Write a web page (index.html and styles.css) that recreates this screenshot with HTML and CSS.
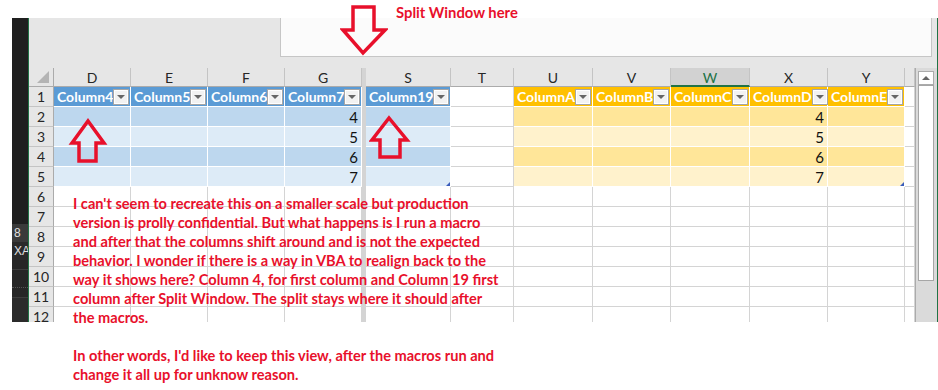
FILE: index.html
```html
<!DOCTYPE html>
<html lang="en">
<head>
    <meta charset="UTF-8">
    <meta name="viewport" content="width=device-width, initial-scale=1.0">
    <title>Split Window</title>
    <link rel="stylesheet" href="styles.css">
</head>
<body>
    <div class="page">
        <div class="window">
            <div class="dock">
                <div class="dock-top"></div>
                <div class="dock-item lit">8</div>
                <div class="dock-item">XA</div>
                <div class="dock-line"></div>
                <div class="dock-dots"></div>
                <div class="dock-line"></div>
                <div class="dock-rest"></div>
            </div>
            <div class="sheet">
                <div class="formula"><div class="formula-box"></div></div>
                <div class="band"></div>
                <div class="sheet-body">
                    <div class="grid" id="grid"></div>
                    <div class="vscroll">
                        <div class="scroll-btn"></div>
                        <div class="scroll-thumb"></div>
                    </div>
                </div>
            </div>
        </div>

        <div class="note-title">Split Window here</div>
        <svg class="arrow arrow-split" width="48" height="54" viewBox="0 0 48 54">
            <polygon points="13,4 34,4 34,27 45,27 23,50 3,27 13,27"/>
        </svg>
        <svg class="arrow arrow-d" width="40" height="48" viewBox="0 0 40 48">
            <polygon points="20,4 36,26 28,26 28,44 11,44 11,26 4,26"/>
        </svg>
        <svg class="arrow arrow-s" width="42" height="47" viewBox="0 0 42 47">
            <polygon points="20,4 38,26 31,26 31,43 11,43 11,26 3,26"/>
        </svg>

        <p class="note">I can't seem to recreate this on a smaller scale but production
version is prolly confidential. But what happens is I run a macro
and after that the columns shift around and is not the expected
behavior. I wonder if there is a way in VBA to realign back to the
way it shows here? Column 4, for first column and Column 19 first
column after Split Window. The split stays where it should after
the macros.

In other words, I'd like to keep this view, after the macros run and
change it all up for unknow reason.</p>
    </div>

    <script>
        const cols = ['D', 'E', 'F', 'G', '|', 'S', 'T', 'U', 'V', 'W', 'X', 'Y', ''];
        const blue = { D: 'Column4', E: 'Column5', F: 'Column6', G: 'Column7', S: 'Column19' };
        const orange = { U: 'ColumnA', V: 'ColumnB', W: 'ColumnC', X: 'ColumnD', Y: 'ColumnE' };
        const values = { G: [4, 5, 6, 7], X: [4, 5, 6, 7] };

        let html = '<div class="hdr corner"></div>';
        for (let c of cols) {
            if (c === '|') html += '<div class="split"></div>';
            else html += `<div class="hdr col${c === 'W' ? ' selected' : ''}">${c}</div>`;
        }

        for (let r = 1; r <= 12; r++) {
            html += `<div class="hdr rownum">${r}</div>`;
            for (let c of cols) {
                if (c === '|') { html += '<div class="split"></div>'; continue; }
                let table = blue[c] ? 'blue' : orange[c] ? 'orange' : '';
                if (!table || r > 5) { html += '<div class="cell"></div>'; continue; }
                let name = (blue[c] || orange[c]);
                if (r === 1) {
                    html += `<div class="cell th ${table}"><span>${name}</span><i class="drop"></i></div>`;
                } else {
                    let band = r % 2 === 0 ? 'dark' : 'light';
                    let val = values[c] ? values[c][r - 2] : '';
                    let end = (r === 5 && (c === 'S' || c === 'Y')) ? ' end' : '';
                    html += `<div class="cell td ${table} ${band}${end}">${val}</div>`;
                }
            }
        }
        document.getElementById('grid').innerHTML = html;
    </script>
</body>
</html>
```

FILE: styles.css
```css
* {
    box-sizing: border-box;
}
body {
    margin: 0;
    background: #fff;
    font-family: Lato, 'Liberation Sans', sans-serif;
}
.page {
    position: relative;
    width: 938px;
    height: 390px;
    overflow: hidden;
}
.window {
    display: flex;
    margin: 18px 0 0 12px;
    height: 304px;
}

/* dark dock on the left */
.dock {
    width: 16px;
    background: #1f1f1f;
    display: flex;
    flex-direction: column;
}
.dock-top {
    height: 206px;
}
.dock-item {
    height: 18px;
    padding-left: 2px;
    font-family: 'Liberation Sans', sans-serif;
    font-size: 12px;
    line-height: 18px;
    color: #e0e0e0;
    background: #2a2a2a;
    overflow: hidden;
    white-space: nowrap;
}
.dock-item.lit {
    background: #3a3a3a;
}
.dock-line {
    height: 10px;
    border-bottom: 1px solid #3d3d3d;
    background: #262626;
}
.dock-dots {
    height: 18px;
    border-bottom: 1px dotted #555;
    background: #262626;
}
.dock-rest {
    flex: 1;
    background: #2b2b2b;
}

/* sheet */
.sheet {
    width: 910px;
    border-left: 1px solid #217346;
    border-right: 1px solid #217346;
    background: #e6e6e6;
    display: flex;
    flex-direction: column;
}
.formula {
    height: 39px;
    padding: 0 5px 0 251px;
}
.formula-box {
    height: 39px;
    background: #fbfbfb;
    border: 1px solid #c6c6c6;
    border-top: none;
}
.band {
    height: 11px;
}
.sheet-body {
    display: flex;
    height: 254px;
    overflow: hidden;
}
.grid {
    width: 886px;
    display: grid;
    grid-template-columns: 25px 77px 77px 77px 77px 4px 85px 63px 79px 78px 79px 78px 77px 10px;
    grid-template-rows: 19px repeat(12, 20px);
    background: #fff;
    align-content: start;
}
.hdr {
    background: #e6e6e6;
    color: #262626;
    font-size: 14px;
    text-align: center;
    line-height: 19px;
}
.hdr.col {
    border-right: 1px solid #c4c4c4;
    border-bottom: 1px solid #ababab;
}
.hdr.col.selected {
    background: #d2d2d2;
    color: #217346;
    border-bottom: 2px solid #217346;
}
.hdr.corner {
    border-right: 1px solid #ababab;
    border-bottom: 1px solid #ababab;
    position: relative;
}
.hdr.corner::after {
    content: "";
    position: absolute;
    right: 4px;
    bottom: 3px;
    border-left: 12px solid transparent;
    border-bottom: 12px solid #b4b4b4;
}
.hdr.rownum {
    line-height: 20px;
    font-size: 14px;
    border-right: 1px solid #ababab;
    border-bottom: 1px solid #c4c4c4;
}
.split {
    background: #d4d4d4;
}
.cell {
    border-right: 1px solid #d4d4d4;
    border-bottom: 1px solid #d4d4d4;
    font-size: 15px;
    line-height: 20px;
    color: #111;
    text-align: right;
    padding-right: 3px;
}
.cell.td {
    border-color: #fff;
}
.cell.th {
    display: flex;
    align-items: center;
    justify-content: space-between;
    padding: 0 1px 0 3px;
    border-color: #fff;
    color: #fff;
    font-weight: bold;
    font-size: 14px;
    text-align: left;
}
.th.blue {
    background: #5b9bd5;
}
.th.orange {
    background: #ffc000;
}
.td.blue.dark {
    background: #bdd7ee;
}
.td.blue.light {
    background: #ddebf7;
}
.td.orange.dark {
    background: #ffe699;
}
.td.orange.light {
    background: #fff2cc;
}
.td.end {
    position: relative;
}
.td.end::after {
    content: "";
    position: absolute;
    right: 0;
    bottom: 0;
    border-left: 4px solid transparent;
    border-bottom: 4px solid #3a5dbb;
}
.drop {
    width: 16px;
    height: 16px;
    flex-shrink: 0;
    background: #f2f2f2;
    border: 1px solid #a6a6a6;
    box-shadow: inset 0 0 0 1px #fff;
    display: flex;
    align-items: center;
    justify-content: center;
}
.drop::after {
    content: "";
    border-left: 4px solid transparent;
    border-right: 4px solid transparent;
    border-top: 4px solid #666;
}

/* vertical scrollbar */
.vscroll {
    width: 22px;
    border-left: 1px solid #ababab;
    background: #dadada;
    padding: 3px 0 0 2px;
}
.scroll-btn {
    width: 16px;
    height: 14px;
    background: #fff;
    border: 1px solid #ababab;
    display: flex;
    align-items: center;
    justify-content: center;
}
.scroll-btn::after {
    content: "";
    border-left: 4px solid transparent;
    border-right: 4px solid transparent;
    border-bottom: 4px solid #666;
}
.scroll-thumb {
    width: 16px;
    height: 196px;
    background: #fff;
    border: 1px solid #a6a6a6;
}

/* red annotations */
.note-title {
    position: absolute;
    left: 396px;
    top: 3px;
    color: #e8102b;
    font-weight: bold;
    font-size: 14.8px;
}
.arrow {
    position: absolute;
}
.arrow polygon {
    fill: none;
    stroke: #e8102b;
    stroke-width: 3.5;
}
.arrow-split {
    left: 340px;
    top: 3px;
}
.arrow-d {
    left: 68px;
    top: 117px;
}
.arrow-s {
    left: 369px;
    top: 114px;
}
.note {
    position: absolute;
    left: 73px;
    top: 194px;
    margin: 0;
    white-space: pre;
    color: #e8102b;
    font-weight: bold;
    font-size: 14.6px;
    line-height: 19px;
}
```
